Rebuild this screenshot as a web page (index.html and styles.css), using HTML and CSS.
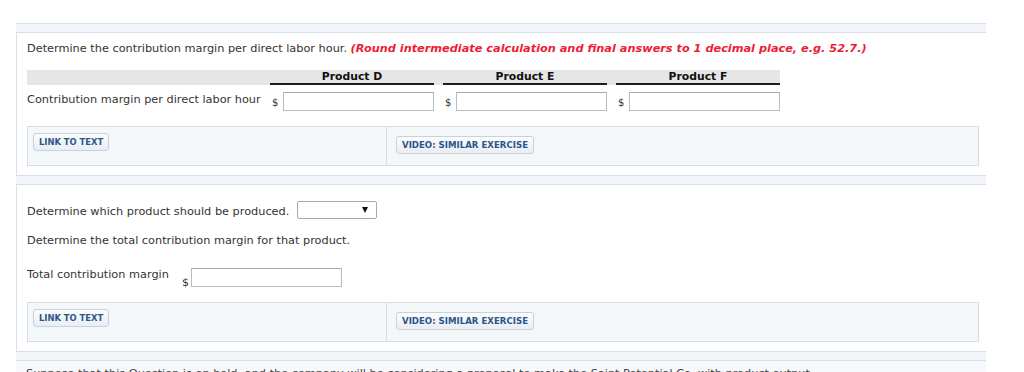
FILE: index.html
```html
<!DOCTYPE html>
<html>
<head>
<meta charset="utf-8">
<title>Contribution margin</title>
<link rel="stylesheet" href="styles.css">
</head>
<body>
<div class="page">
  <div class="strip"></div>
  <section class="panel p1">
    <p class="q">Determine the contribution margin per direct labor hour. <em class="note">(Round intermediate calculation and final answers to 1 decimal place, e.g. 52.7.)</em></p>
    <div class="tbl">
      <div class="thead">
        <div class="th-label"></div>
        <div class="th">Product D</div>
        <div class="th">Product E</div>
        <div class="th">Product F</div>
      </div>
      <div class="trow">
        <div class="td-label">Contribution margin per direct labor hour</div>
        <div class="td"><span class="dollar">$</span><input class="inp" type="text"></div>
        <div class="td"><span class="dollar">$</span><input class="inp" type="text"></div>
        <div class="td"><span class="dollar">$</span><input class="inp" type="text"></div>
      </div>
    </div>
    <div class="links">
      <div class="lcell"><span class="btn">LINK TO TEXT</span></div>
      <div class="rcell"><span class="btn vid">VIDEO: SIMILAR EXERCISE</span></div>
    </div>
  </section>
  <div class="strip"></div>
  <section class="panel p2">
    <div class="line sel-line">
      <span class="sel-text">Determine which product should be produced.</span>
      <span class="select"><span class="arrow"></span></span>
    </div>
    <p class="line l2">Determine the total contribution margin for that product.</p>
    <div class="line tot-line">
      <span class="tot-label">Total contribution margin</span>
      <span class="dollar">$</span><input class="inp" type="text">
    </div>
    <div class="links">
      <div class="lcell"><span class="btn">LINK TO TEXT</span></div>
      <div class="rcell"><span class="btn vid">VIDEO: SIMILAR EXERCISE</span></div>
    </div>
  </section>
  <div class="strip"></div>
  <section class="panel p3">
    <p class="q">Suppose that this Question is on hold, and the company will be considering a proposal to make the Saint Potential Co. with product output.</p>
  </section>
</div>
</body>
</html>
```

FILE: styles.css
```css
html, body {
  margin: 0;
  padding: 0;
  background: #ffffff;
}
body {
  font-family: "DejaVu Sans", Verdana, sans-serif;
  font-size: 11.3px;
  color: #333333;
}
.page {
  padding-top: 23px;
  margin-left: 16px;
  width: 970px;
}
.strip {
  height: 8px;
  background: #f2f6fa;
  border-top: 1px solid #d9e0e8;
  border-bottom: 1px solid #d9e0e8;
}
.panel {
  border-left: 1px solid #d9e0e8;
  padding: 9px 8px 9px 10px;
}
.q {
  margin: 0;
  line-height: 14px;
  white-space: nowrap;
}
.note {
  color: #ee1c36;
  font-weight: bold;
  font-style: italic;
}
.tbl {
  margin-top: 14px;
  width: 753px;
}
.thead {
  display: grid;
  grid-template-columns: 234px 164px 164px 164px;
  column-gap: 9px;
  background: #e6e6e6;
  height: 15px;
}
.th {
  border-bottom: 2px solid #1e1e1e;
  text-align: center;
  font-weight: bold;
  font-size: 10.8px;
  line-height: 13px;
  color: #111111;
}
.trow {
  display: grid;
  grid-template-columns: 234px 164px 164px 164px;
  column-gap: 9px;
  margin-top: 7px;
  height: 19px;
}
.td-label {
  line-height: 14px;
  padding-top: 1px;
}
.td {
  display: flex;
  align-items: flex-end;
}
.dollar {
  width: 13px;
  flex: none;
  font-size: 10px;
  line-height: 10px;
  padding-left: 2px;
  box-sizing: border-box;
  padding-bottom: 3px;
  color: #333333;
}
.inp {
  width: 151px;
  height: 19px;
  box-sizing: border-box;
  margin: 0;
  padding: 0 2px;
  border: 1px solid #bcbcbc;
  border-top-color: #a9a9a9;
  background: #ffffff;
  font: inherit;
  outline: none;
}
.links {
  display: grid;
  grid-template-columns: 359px 1fr;
  width: 952px;
  height: 40px;
  box-sizing: border-box;
  margin-top: 15px;
  background: #f4f7fa;
  border: 1px solid #d7dde6;
}
.lcell {
  border-right: 1px solid #d7dde6;
  padding: 6px 0 0 5px;
}
.rcell {
  padding: 9px 0 0 9px;
}
.btn {
  display: inline-block;
  height: 18px;
  box-sizing: border-box;
  padding: 0 5px;
  line-height: 16px;
  border: 1px solid #c9d1db;
  border-radius: 3px;
  background: linear-gradient(#fbfcfd, #e9eef3);
  color: #2b5689;
  font-weight: bold;
  font-size: 8.4px;
  vertical-align: top;
}
.btn.vid {
  font-size: 8.6px;
  padding: 0 5px;
}
.p2 {
  padding-top: 16px;
}
.line {
  margin: 0;
  line-height: 14px;
}
.sel-line {
  display: flex;
  align-items: center;
  height: 18px;
}
.sel-text {
  padding-top: 4px;
}
.select {
  margin-left: 8px;
  width: 80px;
  height: 18px;
  box-sizing: border-box;
  border: 1px solid #a8a8a8;
  border-radius: 2px;
  background: #ffffff;
  display: flex;
  align-items: center;
  justify-content: flex-end;
  padding-right: 8px;
}
.arrow {
  width: 0;
  height: 0;
  border-left: 3.5px solid transparent;
  border-right: 3.5px solid transparent;
  border-top: 6px solid #111111;
}
.l2 {
  margin-top: 15px;
}
.tot-line {
  display: flex;
  align-items: flex-start;
  margin-top: 20px;
  height: 19px;
}
.tot-label {
  line-height: 14px;
  margin-right: 13px;
}
.tot-line .dollar {
  align-self: flex-end;
  width: 9px;
  font-size: 11px;
  padding-left: 0;
  padding-bottom: 0;
  margin-bottom: -1px;
}
.p3 {
  padding-top: 6px;
  border-left: none;
  background: #f6f8fb;
  height: 40px;
}
.p3 .q {
  color: #444444;
}
```
